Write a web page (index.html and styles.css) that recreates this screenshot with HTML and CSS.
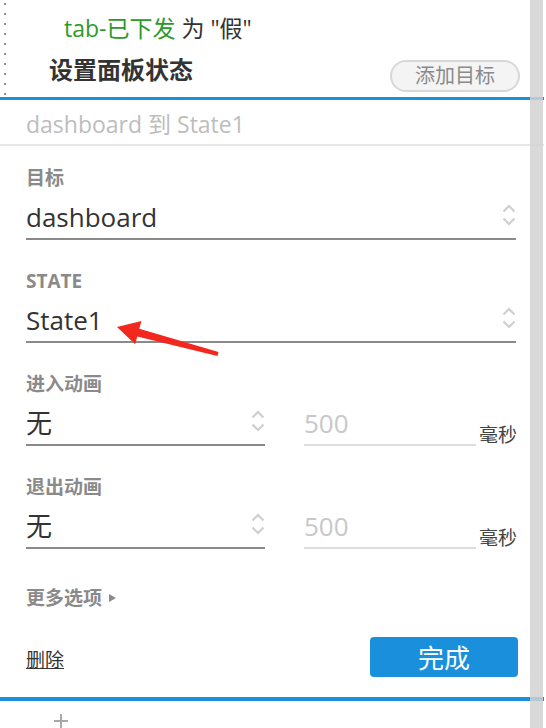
FILE: index.html
```html
<!DOCTYPE html>
<html lang="zh-CN">
<head>
  <meta charset="UTF-8">
  <meta name="viewport" content="width=device-width, initial-scale=1.0">
  <title>设置面板状态</title>
  <link rel="stylesheet" href="styles.css">
</head>
<body>
  <div class="app">
    <div class="panel">
      <!-- 条件 + 动作 -->
      <div class="case">
        <p class="cond"><span class="var">tab-已下发</span> 为 "假"</p>
        <div class="action-row">
          <strong class="action">设置面板状态</strong>
          <button class="add-btn">添加目标</button>
        </div>
      </div>

      <!-- 编辑区 -->
      <div class="editor">
        <div class="summary">dashboard 到 State1</div>
        <div class="form">
          <div class="field">
            <label class="label">目标</label>
            <div class="select">
              <span>dashboard</span>
              <svg class="chev" width="14" height="24" viewBox="0 0 14 24"><polyline points="1.5,8.5 7,3 12.5,8.5"/><polyline points="1.5,15.5 7,21 12.5,15.5"/></svg>
            </div>
          </div>

          <div class="field">
            <label class="label">STATE</label>
            <div class="select">
              <span>State1</span>
              <svg class="chev" width="14" height="24" viewBox="0 0 14 24"><polyline points="1.5,8.5 7,3 12.5,8.5"/><polyline points="1.5,15.5 7,21 12.5,15.5"/></svg>
            </div>
          </div>

          <div class="field">
            <label class="label">进入动画</label>
            <div class="anim-row">
              <div class="select half">
                <span>无</span>
                <svg class="chev" width="14" height="24" viewBox="0 0 14 24"><polyline points="1.5,8.5 7,3 12.5,8.5"/><polyline points="1.5,15.5 7,21 12.5,15.5"/></svg>
              </div>
              <div class="ms-input">500</div>
              <span class="unit">毫秒</span>
            </div>
          </div>

          <div class="field">
            <label class="label">退出动画</label>
            <div class="anim-row">
              <div class="select half">
                <span>无</span>
                <svg class="chev" width="14" height="24" viewBox="0 0 14 24"><polyline points="1.5,8.5 7,3 12.5,8.5"/><polyline points="1.5,15.5 7,21 12.5,15.5"/></svg>
              </div>
              <div class="ms-input">500</div>
              <span class="unit">毫秒</span>
            </div>
          </div>

          <div class="more">更多选项<span class="tri"></span></div>

          <div class="footer">
            <a class="del" href="#">删除</a>
            <button class="done-btn">完成</button>
          </div>
        </div>
      </div>

      <div class="add-case">
        <svg width="14" height="14" viewBox="0 0 14 14"><path d="M7 0V14M0 7H14"/></svg>
      </div>
    </div>

    <!-- 滚动条 -->
    <div class="scrollbar"></div>

    <!-- 红色标注箭头 -->
    <svg class="mark" width="546" height="728" viewBox="0 0 546 728">
      <polygon points="117,327 141.4,321.1 139.3,328.8 218.5,352.1 217.5,355.9 137.3,336.6 135.2,344.3"/>
    </svg>
  </div>
</body>
</html>
```

FILE: styles.css
```css
/* 基础 */
html, body {
  margin: 0;
  padding: 0;
  background: #ffffff;
  font-family: "Open Sans", "Noto Sans CJK SC", sans-serif;
  color: #333333;
  overflow: hidden;
}

.app {
  position: relative;
  width: 546px;
  height: 728px;
}

.panel {
  width: 544px;
}

/* 条件行 */
.case {
  padding: 14px 24px 5px 0;
  background-image: linear-gradient(#8c8c8c 2px, transparent 2px);
  background-size: 2px 10px;
  background-repeat: repeat-y;
  background-position: 4px 3px;
}

.cond {
  margin: 0 0 14px 64px;
  font-size: 23px;
  line-height: 28px;
  color: #333333;
}

.var {
  color: #2b9a2b;
}

.action-row {
  display: flex;
  justify-content: space-between;
  align-items: flex-start;
}

.action {
  margin-left: 49px;
  font-size: 24px;
  line-height: 28px;
  font-weight: bold;
  color: #333333;
}

.add-btn {
  margin-top: 4px;
  width: 130px;
  height: 32px;
  padding: 0;
  border: 2px solid #d8d8d8;
  border-radius: 16px;
  background: #f4f4f4;
  font-family: inherit;
  font-size: 20px;
  line-height: 26px;
  color: #8a8a8a;
}

/* 编辑区 */
.editor {
  border-top: 3px solid #1a8fdc;
  border-bottom: 4px solid #1a8fdc;
}

.summary {
  padding: 10px 26px 6px;
  font-size: 23px;
  line-height: 28px;
  color: #bdbdbd;
  border-bottom: 2px solid #e8e8e8;
}

.form {
  padding: 20px 28px 20px 26px;
}

.field {
  margin-bottom: 29px;
}

.label {
  display: block;
  font-size: 19px;
  line-height: 24px;
  font-weight: bold;
  color: #8a8a8a;
  margin-bottom: 13px;
}

.select {
  display: flex;
  justify-content: space-between;
  align-items: center;
  padding-bottom: 7px;
  border-bottom: 2px solid #8a8a8a;
  font-size: 26px;
  line-height: 28px;
  color: #333333;
}

.chev {
  margin-top: -4px;
  flex-shrink: 0;
  fill: none;
  stroke: #cfcfcf;
  stroke-width: 2.2;
}

.anim-row {
  display: flex;
  align-items: flex-end;
}

.select.half {
  width: 239px;
  flex-shrink: 0;
}

.ms-input {
  width: 172px;
  flex-shrink: 0;
  margin-left: 39px;
  padding-bottom: 7px;
  border-bottom: 2px solid #dddddd;
  font-size: 26px;
  line-height: 28px;
  color: #c8c8c8;
}

.unit {
  margin-left: 3px;
  white-space: nowrap;
  font-size: 19px;
  line-height: 22px;
  color: #444444;
}

.more {
  display: flex;
  align-items: center;
  margin-top: 37px;
  font-size: 19px;
  line-height: 24px;
  font-weight: bold;
  color: #8a8a8a;
}

.tri {
  margin-left: 7px;
  border-left: 7px solid #8a8a8a;
  border-top: 4px solid transparent;
  border-bottom: 4px solid transparent;
}

.footer {
  display: flex;
  justify-content: space-between;
  align-items: center;
  margin-top: 27px;
  margin-right: -2px;
}

.del {
  font-size: 19px;
  line-height: 24px;
  color: #333333;
  text-decoration: underline;
  margin-top: 6px;
}

.done-btn {
  width: 148px;
  height: 40px;
  padding: 0;
  border: none;
  border-radius: 4px;
  background: #1a8fdc;
  font-family: inherit;
  font-size: 26px;
  color: #ffffff;
}

/* 底部加号 */
.add-case {
  padding: 13px 0 0 54px;
  line-height: 0;
}

.add-case svg {
  stroke: #a8a8a8;
  stroke-width: 2;
}

/* 浮在内容上的滚动条 */
.scrollbar {
  position: absolute;
  top: 0;
  left: 530px;
  width: 13px;
  height: 728px;
  background: rgba(210, 210, 210, 0.85);
}

/* 标注箭头 */
.mark {
  position: absolute;
  top: 0;
  left: 0;
  pointer-events: none;
}

.mark polygon {
  fill: #f2281e;
}
```
